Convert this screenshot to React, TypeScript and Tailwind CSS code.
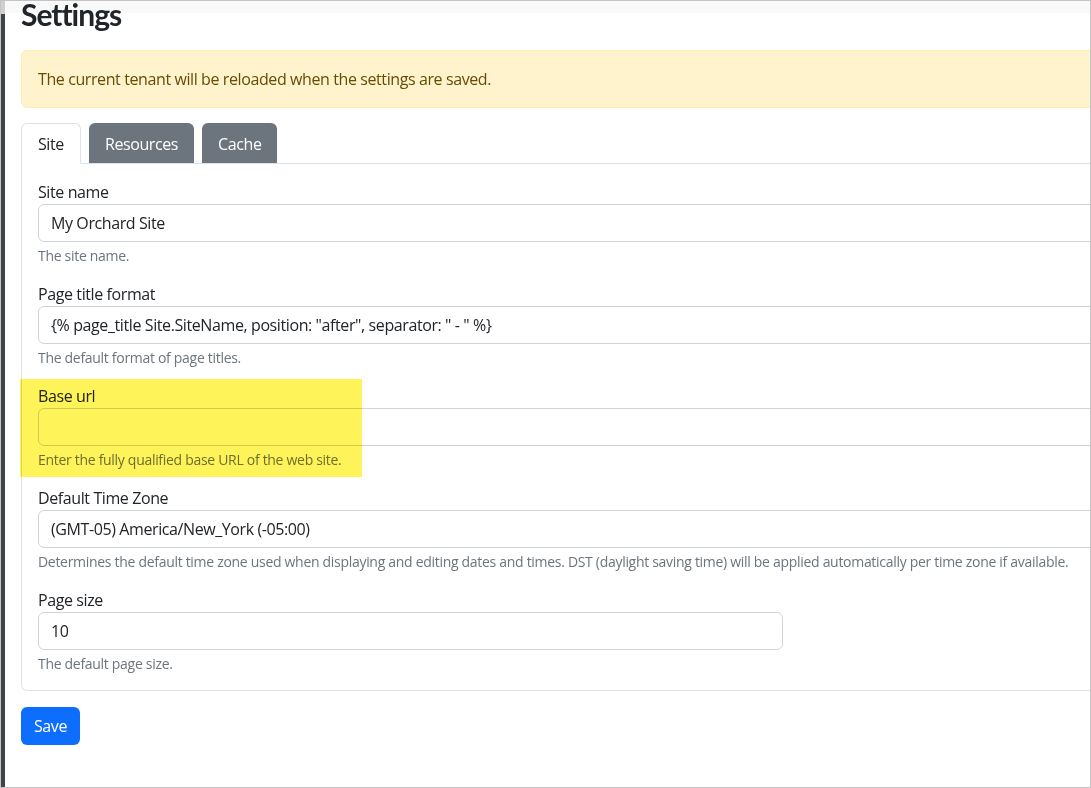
import React from "react";

const font = { fontFamily: '"Open Sans", "Noto Sans", sans-serif' };

function Field({
  label,
  value,
  help,
  narrow,
  last,
}: {
  label: string;
  value: string;
  help: string;
  narrow?: boolean;
  last?: boolean;
}) {
  return (
    <div className={last ? "" : "mb-4"}>
      <div className="h-6 text-[16px] leading-6 tracking-[-0.4px] text-[#212529]">{label}</div>
      <div
        className={`h-[38px] border border-[#ced4da] rounded-[6px] bg-white px-3 flex items-center text-[16px] tracking-[-0.4px] text-[#212529] ${
          narrow ? "w-[745px]" : "w-full"
        }`}
      >
        {value}
      </div>
      <div className="mt-1 h-5 text-[14px] leading-5 tracking-[-0.3px] text-[#6c757d] whitespace-nowrap">{help}</div>
    </div>
  );
}

export default function App() {
  return (
    <div
      className="w-[1091px] h-[788px] border border-[#c4c4c4] bg-white flex overflow-hidden relative"
      style={font}
    >
      <div className="w-[4px] flex flex-col shrink-0">
        <div className="h-[13px] bg-[#cfcfcf]" />
        <div className="flex-1 bg-[#3e444a]" />
      </div>
      <div className="flex-1 bg-[linear-gradient(to_bottom,#f9f9f9_12px,#ffffff_12px)] overflow-hidden">
        <div className="w-[1120px] pl-[16px]">
          <h1
            className="text-[30px] font-bold leading-[36px] tracking-[-1px] text-[#212529] -mt-[5px] h-[36px]"
            style={{ fontFamily: 'Lato, "Open Sans", sans-serif' }}
          >
            Settings
          </h1>
          <div className="mt-[18px] h-[58px] border border-[#ffecb5] bg-[#fff3cd] rounded-l-[6px] px-4 flex items-center text-[16px] tracking-[-0.4px] text-[#664d03]">
            The current tenant will be reloaded when the settings are saved.
          </div>
          <div className="mt-[15px] flex border-b border-[#dee2e6] h-[41px] text-[16px] tracking-[-0.4px]">
            <div className="h-[41px] px-4 pt-[1px] flex items-center border border-[#dee2e6] border-b-white bg-white rounded-t-[6px] text-[#212529]">
              Site
            </div>
            <div className="ml-2 h-[40px] px-4 pt-[1px] flex items-center bg-[#6c757d] rounded-t-[6px] text-white">
              Resources
            </div>
            <div className="ml-2 h-[40px] px-4 pt-[1px] flex items-center bg-[#6c757d] rounded-t-[6px] text-white">
              Cache
            </div>
          </div>
          <div className="border-x border-b border-[#dee2e6] rounded-b-[6px] p-4">
            <Field label="Site name" value="My Orchard Site" help="The site name." />
            <Field
              label="Page title format"
              value={'{% page_title Site.SiteName, position: "after", separator: " - " %}'}
              help="The default format of page titles."
            />
            <Field label="Base url" value="" help="Enter the fully qualified base URL of the web site." />
            <Field
              label="Default Time Zone"
              value="(GMT-05) America/New_York (-05:00)"
              help="Determines the default time zone used when displaying and editing dates and times. DST (daylight saving time) will be applied automatically per time zone if available."
            />
            <Field label="Page size" value="10" help="The default page size." narrow last />
          </div>
          <button className="mt-4 h-[38px] w-[59px] rounded-[6px] bg-[#0d6efd] text-white text-[16px] tracking-[-0.4px]">
            Save
          </button>
        </div>
      </div>
      <div className="absolute left-[19px] top-[378px] w-[342px] h-[98px] bg-[#fff35a] mix-blend-multiply pointer-events-none" />
    </div>
  );
}
